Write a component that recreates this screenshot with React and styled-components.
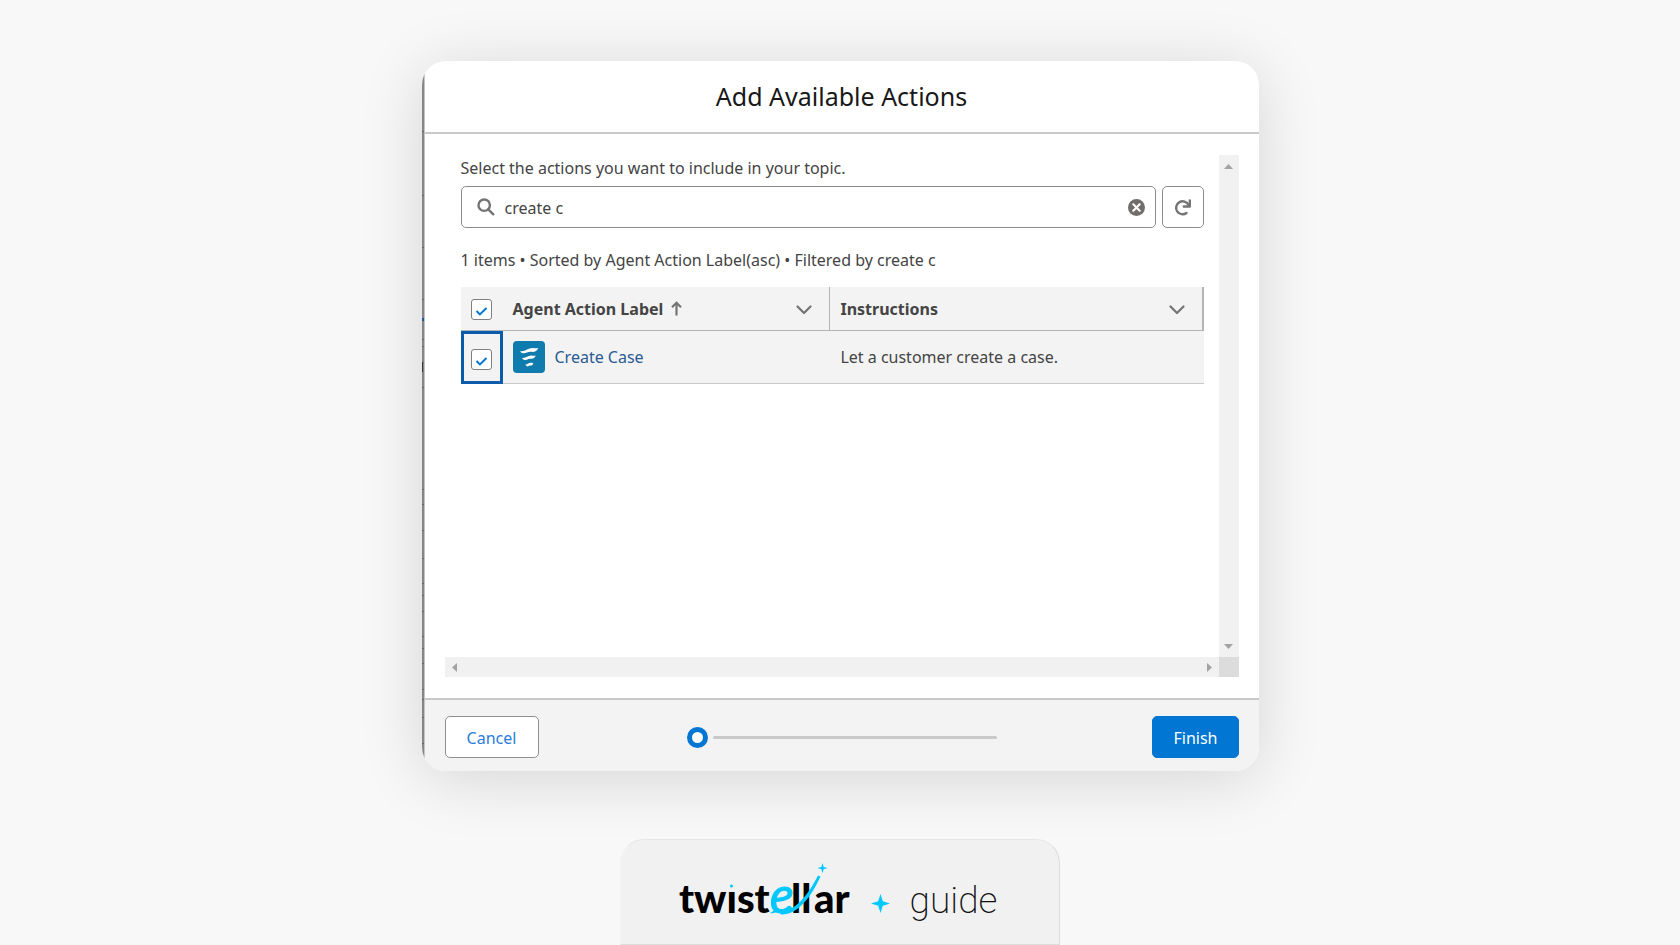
import React, { useState } from "react";
import styled, { createGlobalStyle } from "styled-components";

const GlobalStyle = createGlobalStyle`
  *, *::before, *::after { box-sizing: border-box; }
  body {
    margin: 0;
    background: #f8f8f8;
    color: #444;
    font-family: "Noto Sans", "Open Sans", sans-serif;
    font-size: 16px;
    line-height: 24px;
  }
  button, input { font: inherit; color: inherit; }
`;

const Page = styled.div`
  min-height: 100vh;
  display: flex;
  flex-direction: column;
  align-items: center;
  gap: 68px;
  padding-top: 61px;
`;

const Dialog = styled.section`
  flex: 1;
  width: 100%;
  max-width: 837px;
  display: flex;
  border-radius: 24px;
  overflow: hidden;
  background: #fff;
  box-shadow: 0 8px 64px rgba(0, 0, 0, 0.14);
`;

const tickRows = [70, 134, 186, 238, 278, 285, 326, 428, 443, 469, 497, 522, 534, 550, 575, 587, 602, 628, 638, 656, 682];
const tickLayers = tickRows
  .map((y) => `linear-gradient(#666, #666) 0 ${y}px / 2px 1px no-repeat`)
  .join(", ");

const BackdropEdge = styled.div`
  flex: none;
  width: 3px;
  background: linear-gradient(#1c5a94, #1c5a94) 0 257px / 2px 3px no-repeat,
    linear-gradient(#333, #333) 0 301px / 1px 10px no-repeat, ${tickLayers},
    linear-gradient(to right, #868686 2px, #c4c4c4 2px);
`;

const DialogMain = styled.div`
  flex: 1;
  min-width: 0;
  display: flex;
  flex-direction: column;
`;

const Header = styled.header`
  padding: 19px 20px;
  border-bottom: 2px solid #c9c9c9;
  text-align: center;
`;

const Title = styled.h1`
  margin: 0;
  font-size: 25px;
  line-height: 33px;
  font-weight: 400;
  color: #181818;
`;

const Body = styled.div`
  flex: 1;
  display: grid;
  grid-template-columns: 1fr 20px;
  grid-template-rows: 1fr 20px;
  padding: 21px 20px;
`;

const Content = styled.div`
  min-width: 0;
  padding: 0 15px 0 16px;
`;

const FieldLabel = styled.label`
  display: block;
  padding: 1px 0 6px;
`;

const SearchRow = styled.div`
  display: flex;
  gap: 6px;
`;

const SearchField = styled.div`
  flex: 1;
  min-width: 0;
  height: 42px;
  display: flex;
  align-items: center;
  gap: 10px;
  padding: 0 10px 0 15px;
  border: 1px solid #8c8c8c;
  border-radius: 5px;
  background: #fff;
`;

const SearchInput = styled.input`
  flex: 1;
  min-width: 0;
  padding: 2px 0 0;
  border: 0;
  outline: 0;
  background: none;
`;

const IconButton = styled.button`
  display: flex;
  align-items: center;
  justify-content: center;
  padding: 0;
  border: 0;
  background: none;
  color: #747474;
  cursor: pointer;
`;

const RefreshButton = styled(IconButton)`
  width: 42px;
  height: 42px;
  border: 1px solid #8c8c8c;
  border-radius: 5px;
  background: #fff;
`;

const Summary = styled.p`
  margin: 0;
  padding: 20px 0 15px;
`;

const Table = styled.table`
  width: 100%;
  table-layout: fixed;
  border-collapse: separate;
  border-spacing: 0;
  background: #f3f3f3;
`;

const HeadCell = styled.th`
  width: ${(p) => p.$width || "auto"};
  height: 44px;
  padding: ${(p) => (p.$check ? "0" : "0 17px 0 10px")};
  border-bottom: 1px solid #b4b4b4;
  text-align: left;
  font-weight: 700;
`;

const HeadInner = styled.div`
  display: flex;
  align-items: center;
  gap: 8px;
`;

const Divider = styled.th`
  width: ${(p) => p.$size};
  padding: 0;
  background: #b4b4b4;
  border-bottom: 1px solid #b4b4b4;
`;

const Push = styled.span`
  margin-left: auto;
  padding-top: 2px;
  display: flex;
`;

const Cell = styled.td`
  height: 53px;
  padding: ${(p) => (p.$check ? "0" : "0 10px")};
  border-bottom: 1px solid #c9c9c9;
  ${(p) => p.$check && "outline: 3px solid #0b5cab; outline-offset: -3px;"}
`;

const ActionName = styled.div`
  display: flex;
  align-items: center;
  gap: 10px;
`;

const ActionLink = styled.a`
  color: #2b5a93;
  text-decoration: none;
`;

const CheckLabel = styled.label`
  display: grid;
  width: 21px;
  height: 21px;
  margin: ${(p) => (p.$lowered ? "5px auto 0" : "2px auto 0")};
  cursor: pointer;
  > * { grid-area: 1 / 1; }
  svg { pointer-events: none; visibility: hidden; }
  input:checked + svg { visibility: visible; }
`;

const CheckInput = styled.input`
  appearance: none;
  width: 21px;
  height: 21px;
  margin: 0;
  border: 1px solid #808080;
  border-radius: 3px;
  background: #fff;
`;

const VerticalBar = styled.div`
  display: flex;
  flex-direction: column;
  justify-content: space-between;
  align-items: center;
  padding: 9px 0 8px;
  background: #f1f1f1;
`;

const HorizontalBar = styled.div`
  display: flex;
  justify-content: space-between;
  align-items: center;
  padding: 0 7px;
  background: #f1f1f1;
`;

const BarCorner = styled.div`
  background: #dcdcdc;
`;

const Footer = styled.footer`
  display: grid;
  grid-template-columns: 1fr auto 1fr;
  align-items: center;
  padding: 16px 20px 13px;
  border-top: 2px solid #c9c9c9;
  background: #f3f3f3;
`;

const ActionButton = styled.button`
  height: 42px;
  padding: 2px 20px 0;
  border: 1px solid ${(p) => (p.$primary ? "#0176d3" : "#8f8f8f")};
  border-radius: 5px;
  background: ${(p) => (p.$primary ? "#0176d3" : "#fff")};
  color: ${(p) => (p.$primary ? "#fff" : "#2a7ddb")};
  justify-self: ${(p) => (p.$primary ? "end" : "start")};
  min-width: ${(p) => (p.$primary ? "86px" : "94px")};
  cursor: pointer;
`;

const Progress = styled.div`
  display: flex;
  align-items: center;
  gap: 5px;
  width: 310px;
`;

const Step = styled.span`
  width: 21px;
  height: 21px;
  border: 5px solid #0176d3;
  border-radius: 50%;
  background: #fff;
`;

const Track = styled.span`
  flex: 1;
  height: 3px;
  border-radius: 2px;
  background: #c9c9c9;
`;

const GuideTab = styled.aside`
  display: flex;
  align-items: flex-start;
  height: 106px;
  padding: 25px 62px 0 57px;
  border: 1px solid #dcdcdc;
  border-left-color: #f3f3f3;
  border-top-color: #e6e6e6;
  border-radius: 24px 24px 0 0;
  background: #f1f1f1;
`;

const GuideText = styled.span`
  margin-left: 20px;
  padding-top: 15px;
  font-family: Roboto, sans-serif;
  font-weight: 200;
  font-size: 37px;
  line-height: 42px;
  color: #111;
`;

const SparkIcon = styled.svg`
  margin: 29px 0 0 19px;
`;

function Checkbox({ label, lowered }) {
  const [checked, setChecked] = useState(true);
  return (
    <CheckLabel $lowered={lowered}>
      <CheckInput
        type="checkbox"
        aria-label={label}
        checked={checked}
        onChange={(e) => setChecked(e.target.checked)}
      />
      <svg width="21" height="21" viewBox="0 0 21 21" fill="none" stroke="#0176d3" strokeWidth="2">
        <path d="M5.500 12l3.400 3.400L15.500 9" />
      </svg>
    </CheckLabel>
  );
}

const Chevron = () => (
  <svg width="16" height="10" viewBox="0 0 16 10" fill="none" stroke="#747474" strokeWidth="2.200" strokeLinecap="round" strokeLinejoin="round">
    <path d="M1.500 1.500L8 8l6.500-6.500" />
  </svg>
);

const Triangle = ({ points, w, h }) => (
  <svg width={w} height={h} viewBox={`0 0 ${w} ${h}`} fill="#a3a3a3">
    <polygon points={points} />
  </svg>
);

const TwistellarLogo = () => (
  <svg width="174" height="60" viewBox="0 0 174 60" overflow="visible" role="img" aria-label="twistellar">
    <g fontFamily="Lato, sans-serif" fontWeight="900" fontSize="40" fill="#000">
      <text x="1" y="48">twıst</text>
      <text x="113" y="48">ll</text>
      <text x="136" y="48">ar</text>
    </g>
    <text x="92" y="48" fontFamily="Lato, sans-serif" fontWeight="400" fontStyle="italic" fontSize="50" fill="#00c8ff" stroke="#00c8ff" strokeWidth="1">e</text>
    <path d="M92 48q3-1 6-5l2 3q-4 3-8 2z" fill="#00c8ff" />
    <path d="M101 46.500C118 47 131 28 140 10.500l2.500 1C133 32 120 50 103 49.500z" fill="#00c8ff" />
    <path d="M144.500-2l1.100 4 4 1.100-4 1.100-1.100 4-1.100-4-4-1.100 4-1.100z" fill="#00c8ff" />
    <circle cx="53.500" cy="21" r="1.500" fill="#00c8ff" />
  </svg>
);

export default function App() {
  const [query, setQuery] = useState("create c");
  return (
    <>
      <GlobalStyle />
      <Page>
        <Dialog aria-labelledby="dialog-title">
          <BackdropEdge />
          <DialogMain>
            <Header>
              <Title id="dialog-title">Add Available Actions</Title>
            </Header>
            <Body>
              <Content>
                <FieldLabel htmlFor="search">Select the actions you want to include in your topic.</FieldLabel>
                <SearchRow>
                  <SearchField>
                    <svg width="18" height="18" viewBox="0 0 18 18" fill="none" stroke="#747474" strokeWidth="2.400">
                      <circle cx="7.200" cy="7.200" r="5.700" />
                      <path d="M11.300 11.300l5 5" strokeLinecap="round" />
                    </svg>
                    <SearchInput id="search" type="text" value={query} onChange={(e) => setQuery(e.target.value)} />
                    <IconButton type="button" aria-label="Clear" onClick={() => setQuery("")}>
                      <svg width="17" height="17" viewBox="0 0 17 17">
                        <circle cx="8.500" cy="8.500" r="8.500" fill="#706e6b" />
                        <path d="M5.300 5.300l6.400 6.400M11.700 5.300l-6.400 6.400" stroke="#fff" strokeWidth="2.200" strokeLinecap="round" />
                      </svg>
                    </IconButton>
                  </SearchField>
                  <RefreshButton type="button" aria-label="Refresh">
                    <svg width="18" height="18" viewBox="0 0 18 18" fill="none" stroke="#747474" strokeWidth="2.400">
                      <path d="M12.500 15A6.500 6.500 0 1 1 14.500 7" strokeLinecap="round" />
                      <path d="M15.800 2.500v6h-6" strokeLinejoin="round" strokeLinecap="round" />
                    </svg>
                  </RefreshButton>
                </SearchRow>
                <Summary>1 items • Sorted by Agent Action Label(asc) • Filtered by create c</Summary>
                <Table>
                  <thead>
                    <tr>
                      <HeadCell $check $width="42px">
                        <Checkbox label="Select all" />
                      </HeadCell>
                      <HeadCell $width="44%">
                        <HeadInner>
                          Agent Action Label
                          <svg width="11" height="15" viewBox="0 0 11 15" fill="none" stroke="#747474" strokeWidth="2.200">
                            <path d="M5.500 14.500V2M1 6.200l4.500-4.500L10 6.200" />
                          </svg>
                          <Push><Chevron /></Push>
                        </HeadInner>
                      </HeadCell>
                      <Divider $size="1px" aria-hidden="true" />
                      <HeadCell>
                        <HeadInner>
                          Instructions
                          <Push><Chevron /></Push>
                        </HeadInner>
                      </HeadCell>
                      <Divider $size="2px" aria-hidden="true" />
                    </tr>
                  </thead>
                  <tbody>
                    <tr>
                      <Cell $check>
                        <Checkbox label="Select Create Case" lowered />
                      </Cell>
                      <Cell colSpan={2}>
                        <ActionName>
                          <svg width="32" height="32" viewBox="0 0 32 32">
                            <rect width="32" height="32" rx="4" fill="#107cad" />
                            <g fill="#fff">
                              <path d="M7 10c4.500 1.300 8-3 12.500-3 2 0 4 .5 5.800.2-1.300 2.800-3.800 4-6.800 3.600-4-.4-5.500 2-8.500 1.500-1.500-.3-2.500-1.200-3-2.300z" />
                              <path d="M9 16.800c3.500 1 5.500-2.300 9-2.300 1.800 0 3 .4 4.800.2-1.200 2.300-3 3.300-5.300 3-2.600-.3-4 1.800-6.300 1.300-1.200-.3-1.800-1.200-2.200-2.200z" />
                              <path d="M12.500 23.300c2 .6 3-1.500 5.200-1.500 1 0 1.700.3 2.700.1-.7 2.300-1.900 2.800-3.200 2.600-1.200-.2-1.800 1.200-3 .9-1-.2-1.400-1.200-1.700-2.100z" />
                            </g>
                          </svg>
                          <ActionLink href="#create-case">Create Case</ActionLink>
                        </ActionName>
                      </Cell>
                      <Cell colSpan={2}>Let a customer create a case.</Cell>
                    </tr>
                  </tbody>
                </Table>
              </Content>
              <VerticalBar aria-hidden="true">
                <Triangle w={9} h={5} points="0,5 4.500,0 9,5" />
                <Triangle w={9} h={5} points="0,0 9,0 4.500,5" />
              </VerticalBar>
              <HorizontalBar aria-hidden="true">
                <Triangle w={5} h={9} points="5,0 5,9 0,4.500" />
                <Triangle w={5} h={9} points="0,0 5,4.500 0,9" />
              </HorizontalBar>
              <BarCorner />
            </Body>
            <Footer>
              <ActionButton type="button">Cancel</ActionButton>
              <Progress role="progressbar" aria-label="Progress" aria-valuenow={0} aria-valuemin={0} aria-valuemax={100}>
                <Step />
                <Track />
              </Progress>
              <ActionButton type="button" $primary>Finish</ActionButton>
            </Footer>
          </DialogMain>
        </Dialog>
        <GuideTab>
          <TwistellarLogo />
          <SparkIcon width="19" height="19" viewBox="0 0 19 19" fill="#00c8ff">
            <path d="M9.500 0l2.300 7.200L19 9.500l-7.200 2.300L9.500 19l-2.300-7.200L0 9.500l7.200-2.300z" />
          </SparkIcon>
          <GuideText>guide</GuideText>
        </GuideTab>
      </Page>
    </>
  );
}
